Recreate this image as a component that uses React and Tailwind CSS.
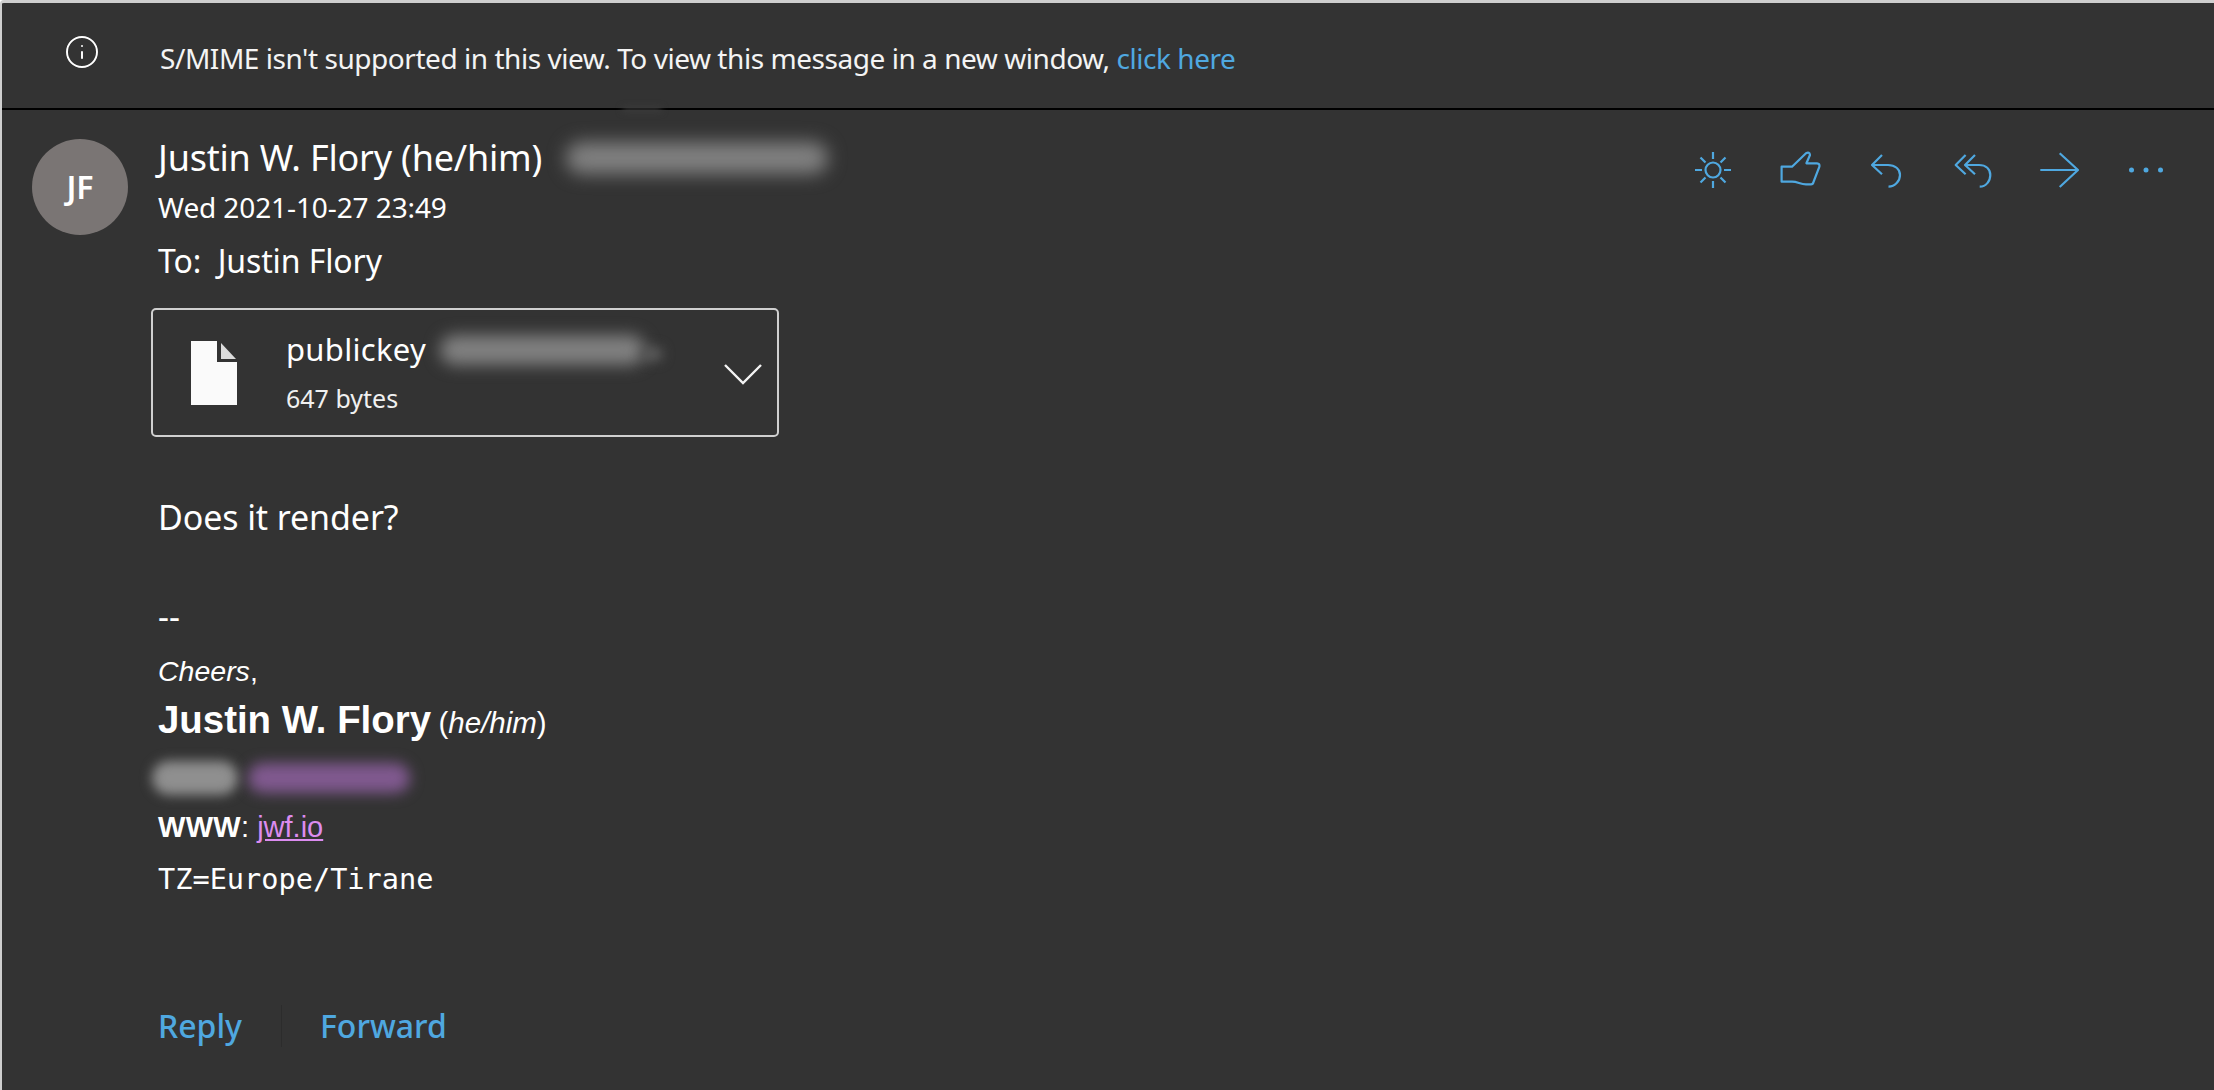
import { Info } from 'lucide-react';

const ui = "font-['Noto_Sans',sans-serif]";
const helv = "font-['Liberation_Sans',sans-serif]";

function Smudge({ className }) {
  return <div className={`rounded-full ${className}`} />;
}

function ToolbarIcon({ children }) {
  return (
    <svg className="w-[48px] h-[48px] text-[#4fa8e0]" viewBox="0 0 48 48" fill="none" stroke="currentColor" strokeWidth="2.2">
      {children}
    </svg>
  );
}

function Toolbar() {
  return (
    <div className="flex gap-[38.600px] mr-[44px] mt-[12px]">
      <ToolbarIcon>
        <circle cx="24" cy="24" r="7.500" />
        <path d="M24 6v7M24 35v7M6 24h7M35 24h7M11.500 11.500l5 5M31.500 31.500l5 5M11.500 36.500l5-5M31.500 16.500l5-5" />
      </ToolbarIcon>
      <ToolbarIcon>
        <path d="M5.600 20.700H16L30 7.200Q33.500 5.500 34 9L30.400 17.300H41Q44 17.500 43.400 20.700L37.500 36Q37 38.300 35 38.300H30C24 38.300 22 35.700 16 35.700H5.600Z" strokeLinejoin="round" />
      </ToolbarIcon>
      <ToolbarIcon>
        <path d="M20 9L10 19L20 28.300M10 19H26C33 19 38 23 38 29C38 35 33 40.700 26.500 40.700" strokeLinejoin="round" />
      </ToolbarIcon>
      <ToolbarIcon>
        <path d="M16.600 9L6.700 19L16.600 28.300M26 9L16 19L26 28.300M16 19H30C37 19 41.300 23 41.300 29C41.300 35 37 40.700 30.700 40.700" strokeLinejoin="round" />
      </ToolbarIcon>
      <ToolbarIcon>
        <path d="M5.300 24H43M24.700 7.300L43 24L24.700 41" strokeLinejoin="round" />
      </ToolbarIcon>
      <ToolbarIcon>
        <circle cx="9.500" cy="24" r="2.500" fill="currentColor" stroke="none" />
        <circle cx="24" cy="24" r="2.500" fill="currentColor" stroke="none" />
        <circle cx="38.500" cy="24" r="2.500" fill="currentColor" stroke="none" />
      </ToolbarIcon>
    </div>
  );
}

function Attachment() {
  return (
    <div className="flex items-center w-[628px] h-[129px] ml-[-7px] mt-[27px] border-2 border-[#d0d0d0] rounded-[5px]">
      <svg className="ml-[37px] w-[48px] h-[66px]" viewBox="0 0 48 66">
        <path d="M1 1h26v21h20v43H1z" fill="#fafafa" />
        <path d="M31 3l15 16H31z" fill="#dcdcdc" />
      </svg>
      <div className="ml-[48px] mb-[3px] flex-1">
        <div className="relative text-[31px] leading-[40px] tracking-[0.3px] text-white">
          publickey
          <Smudge className="absolute left-[154px] top-[6px] w-[205px] h-[30px] bg-[#808080] blur-[8px]" />
          <Smudge className="absolute left-[355px] top-[18px] w-[22px] h-[14px] bg-[#5c5c5c] blur-[6px]" />
        </div>
        <div className="text-[25px] leading-[32px] mt-[13px] text-[#f0f0f0]">647 bytes</div>
      </div>
      <svg className="w-[40px] h-[24px] mr-[14px] mt-[2px]" viewBox="0 0 40 24" fill="none" stroke="#f4f4f4" strokeWidth="2.4">
        <path d="M2 3l18 18L38 3" />
      </svg>
    </div>
  );
}

function Signature() {
  return (
    <div className={`${helv} text-white`}>
      <div className="text-[28.500px] leading-[30px] mt-[20px]"><em>Cheers</em>,</div>
      <div className="leading-[48px] mt-[10px]">
        <b className="text-[38.400px]">Justin W. Flory</b>{' '}
        <span className="ml-[3px] text-[29.500px]">(<em>he/him</em>)</span>
      </div>
      <div className="flex items-center h-[48px] mt-[2px] -ml-[6px]">
        <Smudge className="w-[86px] h-[34px] bg-[#8f8f8f] blur-[6px]" />
        <Smudge className="ml-[10px] w-[162px] h-[30px] bg-[#80598f] blur-[7px]" />
      </div>
      <div className="text-[29px] leading-[40px] mt-[5px]">
        <b className="tracking-[0.300px]">WWW</b>: <a className="text-[#dc8cf0] underline">jwf.io</a>
      </div>
      <div className="font-['DejaVu_Sans_Mono',monospace] text-[28.600px] leading-[36px] mt-[14px]">TZ=Europe/Tirane</div>
    </div>
  );
}

export default function App() {
  return (
    <div className={`${ui} w-[2214px] h-[1090px] overflow-hidden bg-[#333333] text-white border-t-[3px] border-l-2 border-[#cfcfcf] rounded-tl-[4px]`}>
      <div className="relative flex items-center h-[107px] border-b-2 border-black">
        <Info className="ml-[62px] mb-[8px] w-[36px] h-[36px]" strokeWidth={1.3} />
        <p className="ml-[60px] mt-[4px] text-[28px] tracking-[-0.450px] text-[#f4f4f4]">
          S/MIME isn't supported in this view. To view this message in a new window, <a className="text-[#4fa8e0]">click here</a>
        </p>
        <Smudge className="absolute left-[620px] bottom-[-4px] w-[40px] h-[5px] bg-[#3c3c3c] blur-[3px]" />
      </div>

      <div className="flex">
        <div className="flex justify-center items-center shrink-0 w-[96px] h-[96px] ml-[30px] mt-[29px] rounded-full bg-[#7a7574] text-[32px] font-semibold">
          JF
        </div>
        <div className="ml-[30px] flex-1 mt-[24px]">
          <div className="flex justify-between items-start">
            <div>
              <div className="relative text-[36px] leading-[48px] tracking-[-0.2px]">
                Justin W. Flory (he/him)
                <Smudge className="absolute left-[408px] top-[8px] w-[262px] h-[32px] bg-[#808080] blur-[9px]" />
              </div>
              <div className="text-[28px] leading-[36px] mt-[7px] tracking-[-0.1px]">Wed 2021-10-27 23:49</div>
              <div className="text-[32px] leading-[40px] mt-[16px] tracking-[-0.1px]">To:&nbsp; Justin Flory</div>
            </div>
            <Toolbar />
          </div>
          <Attachment />
          <div className="text-[34px] leading-[44px] mt-[58px] tracking-[-0.1px]">Does it render?</div>
          <div className="text-[34px] leading-[40px] mt-[57px]">--</div>
          <Signature />
          <div className="flex items-center mt-[105px] text-[32px] font-medium text-[#4fa8e0]">
            <a>Reply</a>
            <div className="w-px h-[42px] ml-[39px] mr-[38px] bg-[#2c2c2c]" />
            <a>Forward</a>
          </div>
        </div>
      </div>
    </div>
  );
}
